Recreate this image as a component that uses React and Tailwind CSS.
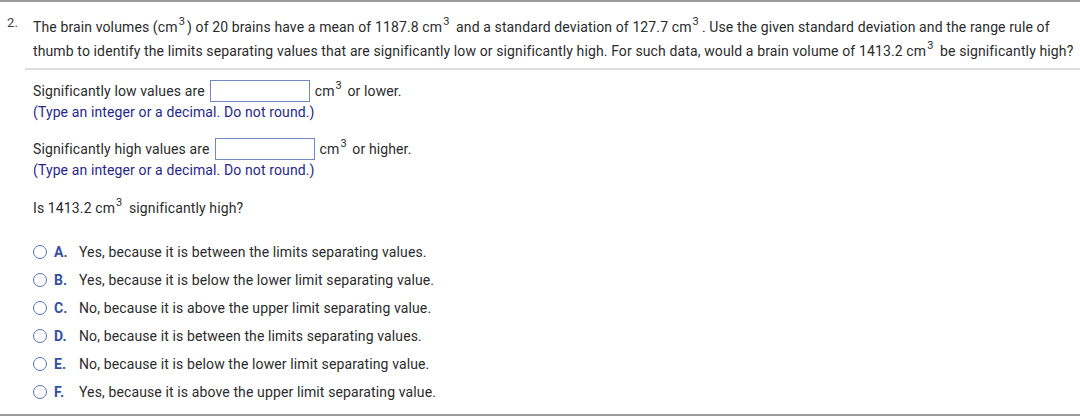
import React from 'react';

// small raised "3" used after cm
function Cube({ tight }) {
  return <span className={`relative -top-[7px] text-[11px] leading-none ml-[1px] ${tight ? 'mr-[2px]' : 'mr-[3px]'}`}>3</span>;
}

function AnswerBox() {
  return <span className="inline-block w-[100px] h-[22px] border border-[#7089c4] bg-white mx-[5px] align-middle" />;
}

const options = [
  ['A.', 'Yes, because it is between the limits separating values.'],
  ['B.', 'Yes, because it is below the lower limit separating value.'],
  ['C.', 'No, because it is above the upper limit separating value.'],
  ['D.', 'No, because it is between the limits separating values.'],
  ['E.', 'No, because it is below the lower limit separating value.'],
  ['F.', 'Yes, because it is above the upper limit separating value.'],
];

function Option({ letter, text }) {
  return (
    <div className="flex items-center h-[28px] leading-[28px]">
      <span className="w-[14px] h-[14px] rounded-full border-[1.5px] border-[#5a73ba] shrink-0" />
      <span className="ml-[7px] w-[25px] font-bold text-[#3450a3]">{letter}</span>
      <span>{text}</span>
    </div>
  );
}

export default function App() {
  return (
    <div
      className="w-[1080px] h-[416px] bg-white border-t-2 border-b-2 border-[#9a9a9a] flex text-[14px] tracking-[0.12px] text-[#2b2b2b] overflow-hidden"
      style={{ fontFamily: 'Roboto, "Liberation Sans", sans-serif' }}
    >
      <div className="w-[33px] shrink-0 pl-[7px] pt-[14px] text-[13px] text-[#444] leading-none">2.</div>
      <div className="flex-1 flex flex-col">
        <p className="pt-[13px] leading-[24px] whitespace-nowrap">
          The brain volumes (cm<Cube tight />) of 20 brains have a mean of 1187.8 cm<Cube /> and a standard deviation of 127.7 cm<Cube />. Use the given standard deviation and the range rule of
          <br />
          thumb to identify the limits separating values that are significantly low or significantly high. For such data, would a brain volume of 1413.2 cm<Cube /> be significantly high?
        </p>
        <div className="mt-[5px] -ml-[8px] h-[2px] bg-[#dcdcdc]" />

        <div className="mt-[10px] flex items-center h-[22px] leading-[22px]">
          <span>Significantly low values are</span>
          <AnswerBox />
          <span className="whitespace-pre">cm<Cube tight /> or lower.</span>
        </div>
        <p className="leading-[20px] text-[#27278a]">(Type an integer or a decimal. Do not round.)</p>

        <div className="mt-[16px] flex items-center h-[22px] leading-[22px]">
          <span>Significantly high values are</span>
          <AnswerBox />
          <span className="whitespace-pre">cm<Cube tight /> or higher.</span>
        </div>
        <p className="leading-[20px] text-[#27278a]">(Type an integer or a decimal. Do not round.)</p>

        <p className="mt-[18px] leading-[20px]">
          Is 1413.2 cm<Cube /> significantly high?
        </p>

        <div className="mt-[20px] flex flex-col">
          {options.map(([l, t]) => (
            <Option key={l} letter={l} text={t} />
          ))}
        </div>
      </div>
    </div>
  );
}
